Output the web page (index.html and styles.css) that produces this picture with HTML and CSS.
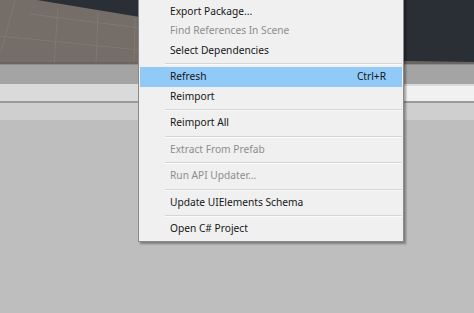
FILE: index.html
```html
<!DOCTYPE html>
<html>
<head>
<meta charset="utf-8">
<link rel="stylesheet" href="styles.css">
</head>
<body>
<div class="editor">
  <svg class="scene" width="474" height="64" viewBox="0 0 474 64">
    <rect x="0" y="0" width="474" height="64" fill="#756e68"/>
    <g stroke="#837b75" stroke-width="1" fill="none" opacity="0.8">
      <line x1="15" y1="0" x2="1" y2="52"/>
      <line x1="58" y1="8" x2="54" y2="64"/>
      <line x1="98" y1="12" x2="96" y2="64"/>
      <line x1="135" y1="18" x2="134" y2="64"/>
      <line x1="30" y1="14" x2="140" y2="28"/>
      <line x1="0" y1="36" x2="140" y2="50"/>
    </g>
    <polygon points="37,0 474,0 474,62 400,61 140,17" fill="#2a2e35"/>
    <rect x="0" y="62" width="474" height="2" fill="#6a6561"/>
  </svg>
  <div class="band band-toolbar"></div>
  <div class="band band-search">
    <div class="search-field"></div>
  </div>
  <div class="band band-header"></div>
  <div class="panel"></div>
</div>

<div class="menu">
  <div class="item">Export Package...</div>
  <div class="item disabled">Find References In Scene</div>
  <div class="item">Select Dependencies</div>
  <div class="sep"></div>
  <div class="item active"><span>Refresh</span><span class="shortcut">Ctrl+R</span></div>
  <div class="item">Reimport</div>
  <div class="sep"></div>
  <div class="item">Reimport All</div>
  <div class="sep"></div>
  <div class="item disabled">Extract From Prefab</div>
  <div class="sep"></div>
  <div class="item disabled">Run API Updater...</div>
  <div class="sep"></div>
  <div class="item">Update UIElements Schema</div>
  <div class="sep"></div>
  <div class="item">Open C# Project</div>
</div>
</body>
</html>
```
FILE: styles.css
```css
html, body {
  margin: 0;
  padding: 0;
  width: 474px;
  height: 313px;
  overflow: hidden;
  background: #bebebe;
  font-family: "Noto Sans", "Open Sans", sans-serif;
}

.editor {
  display: flex;
  flex-direction: column;
  height: 313px;
}

.scene {
  display: block;
  flex: none;
}

.band {
  flex: none;
}

.band-toolbar {
  height: 20px;
  background: #a4a4a4;
  border-top: 1px solid #8f8f8f;
  box-sizing: border-box;
}

.band-search {
  height: 19px;
  background: #dadada;
  border-bottom: 2px solid #9a9a9a;
  box-sizing: border-box;
  display: flex;
  justify-content: flex-end;
  padding: 2px 0 0;
}

.search-field {
  width: 200px;
  background: #f1f1f1;
}

.band-header {
  height: 17px;
  background: #cfcfcf;
}

.panel {
  flex: 1;
  background: #bebebe;
}

.menu {
  position: absolute;
  left: 138px;
  top: -3px;
  width: 266px;
  box-sizing: border-box;
  background: #f0f0f0;
  border: 1px solid #8a8a8a;
  padding: 3.5px 1px 2px;
  box-shadow: 2px 2px 2px rgba(0, 0, 0, 0.35);
  font-size: 10.2px;
  color: #161616;
}

.item {
  height: 19.5px;
  line-height: 19.5px;
  padding: 0 16px 0 30px;
  display: flex;
  justify-content: space-between;
  white-space: nowrap;
}

.item.disabled {
  color: #8d8d8d;
}

.item.active {
  background: #91c9f7;
}

.sep {
  height: 7px;
  box-sizing: border-box;
  padding-top: 3px;
  margin-left: 25px;
}

.sep::before {
  content: "";
  display: block;
  height: 1px;
  background: #d5d5d5;
  border-bottom: 1px solid #fbfbfb;
}
```
